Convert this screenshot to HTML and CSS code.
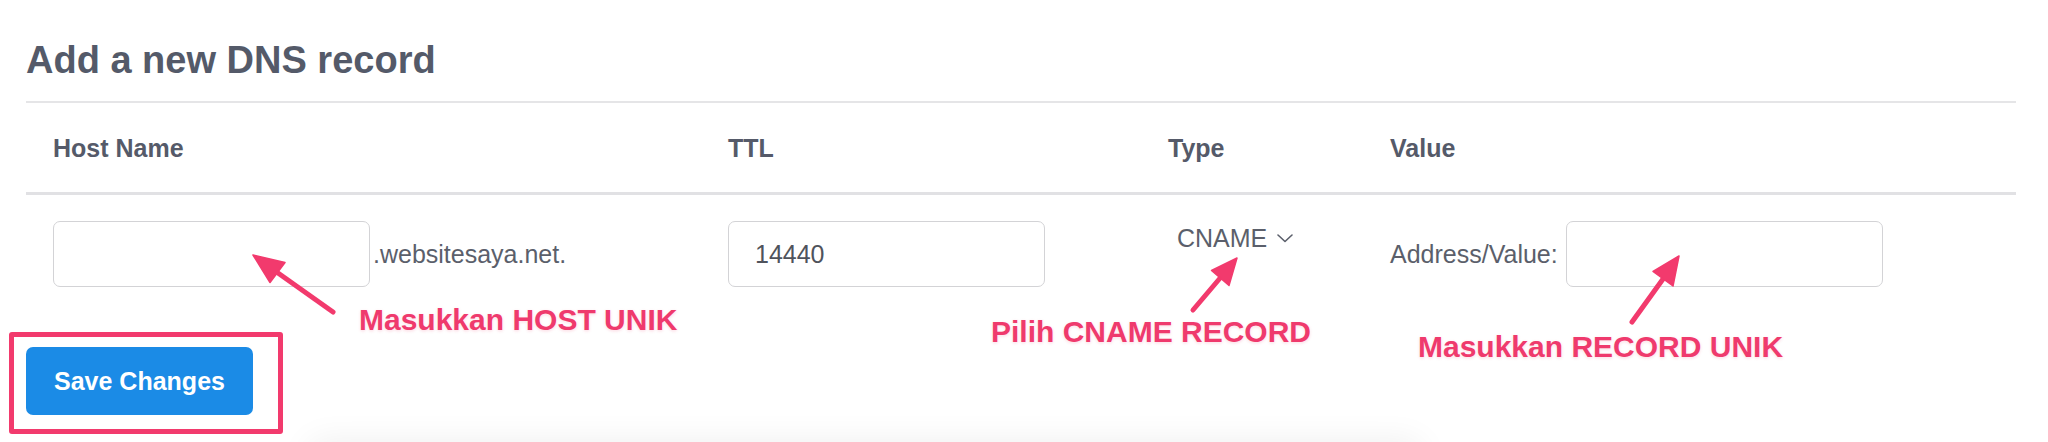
FILE: index.html
```html
<!DOCTYPE html>
<html lang="id">
<head>
<meta charset="utf-8">
<title>Add a new DNS record</title>
<link rel="stylesheet" href="styles.css">
</head>
<body>
<div class="page">
  <h2 class="title">Add a new DNS record</h2>
  <div class="dns-table">
    <div class="dns-head">
      <div class="cell">Host Name</div>
      <div class="cell">TTL</div>
      <div class="cell">Type</div>
      <div class="cell">Value</div>
    </div>
    <div class="dns-row">
      <div class="cell cell-host">
        <input class="field" type="text" value="">
        <span class="suffix">.websitesaya.net.</span>
      </div>
      <div class="cell">
        <input class="field field-ttl" type="text" value="14440">
      </div>
      <div class="cell cell-type">
        <span class="select">CNAME
          <svg class="chev" width="16" height="9" viewBox="0 0 16 9"><polyline points="1,1 8,7.5 15,1" fill="none" stroke="#5b5f6b" stroke-width="1.6" stroke-linecap="round" stroke-linejoin="round"/></svg>
        </span>
      </div>
      <div class="cell cell-value">
        <span class="label">Address/Value:</span>
        <input class="field" type="text" value="">
      </div>
    </div>
  </div>
  <button class="btn-save" type="button">Save Changes</button>
  <div class="next-card"></div>

  <div class="mark-rect"></div>
  <svg class="arrows" width="2048" height="442" viewBox="0 0 2048 442">
    <g fill="#f23a6d" stroke="#f23a6d" stroke-linecap="round">
      <line x1="333" y1="312" x2="278" y2="273" stroke-width="5"/>
      <polygon points="253,255 285,262.5 270,282.5" stroke-width="1.5" stroke-linejoin="round"/>
      <line x1="1193" y1="310" x2="1221" y2="277" stroke-width="5"/>
      <polygon points="1237,258 1229,285.5 1211.5,270.5" stroke-width="1.5" stroke-linejoin="round"/>
      <line x1="1632" y1="322" x2="1663" y2="279" stroke-width="5"/>
      <polygon points="1679,256 1673,286 1653,271.5" stroke-width="1.5" stroke-linejoin="round"/>
    </g>
  </svg>
  <div class="note note-host">Masukkan HOST UNIK</div>
  <div class="note note-type">Pilih CNAME RECORD</div>
  <div class="note note-value">Masukkan RECORD UNIK</div>
</div>
</body>
</html>
```

FILE: styles.css
```css
html, body {
  margin: 0;
  padding: 0;
  background: #ffffff;
}

body {
  font-family: "Liberation Sans", Arial, Helvetica, sans-serif;
  color: #5b5f6b;
}

.page {
  position: relative;
  width: 2048px;
  height: 442px;
  overflow: hidden;
  box-sizing: border-box;
  padding: 38px 32px 0 26px;
  background: #ffffff;
}

.title {
  margin: 0 0 19px 0;
  font-size: 38px;
  line-height: 44px;
  font-weight: 700;
  color: #545a69;
}

.dns-table {
  width: 1990px;
}

.dns-head,
.dns-row {
  display: grid;
  grid-template-columns: 675px 440px 222px 1fr;
}

.dns-head {
  border-top: 2px solid #e5e5e7;
  border-bottom: 3px solid #e1e1e4;
  height: 89px;
  align-items: center;
}

.dns-head .cell {
  padding-left: 27px;
  font-size: 25px;
  line-height: 30px;
  font-weight: 700;
  color: #555a69;
}

.dns-row {
  padding-top: 26px;
  align-items: start;
}

.dns-row .cell {
  padding-left: 27px;
  display: flex;
  align-items: center;
  font-size: 25px;
  line-height: 30px;
}

.field {
  box-sizing: border-box;
  width: 317px;
  height: 66px;
  margin: 0;
  border: 1.5px solid #d3d3d6;
  border-radius: 7px;
  background: #ffffff;
  padding: 0 26px;
  font-family: "Liberation Sans", Arial, Helvetica, sans-serif;
  font-size: 25px;
  color: #4f535c;
  outline: none;
}

.suffix {
  margin-left: 3px;
  color: #5b5f6b;
}

.dns-row .cell-type {
  padding-left: 36px;
  padding-top: 2px;
}

.select {
  display: inline-flex;
  align-items: center;
  color: #5b5f6b;
}

.chev {
  margin-left: 10px;
  margin-top: 0;
}

.label {
  color: #5b5f6b;
  margin-right: 8px;
}

.btn-save {
  display: block;
  margin: 60px 0 0 0;
  width: 227px;
  height: 68px;
  border: none;
  border-radius: 7px;
  background: #1b8be6;
  color: #ffffff;
  font-family: "Liberation Sans", Arial, Helvetica, sans-serif;
  font-size: 25px;
  font-weight: 700;
  padding: 0;
}

.next-card {
  margin: 27px 0 0 284px;
  width: 1110px;
  height: 60px;
  border-radius: 8px;
  box-shadow: 0 0 34px rgba(0, 0, 0, 0.07);
}

.mark-rect {
  position: absolute;
  left: 9px;
  top: 332px;
  width: 274px;
  height: 102px;
  box-sizing: border-box;
  border: 5px solid #f23a6d;
  border-radius: 3px;
}

.arrows {
  position: absolute;
  left: 0;
  top: 0;
  pointer-events: none;
}

.note {
  position: absolute;
  font-size: 30px;
  line-height: 34px;
  font-weight: 700;
  color: #ef3a6d;
  white-space: nowrap;
  text-shadow: 0 0 3px rgba(255, 255, 255, 0.9), 0 1px 3px rgba(239, 58, 109, 0.25);
}

.note-host {
  left: 359px;
  top: 303px;
}

.note-type {
  left: 991px;
  top: 315px;
}

.note-value {
  left: 1418px;
  top: 330px;
}
```
